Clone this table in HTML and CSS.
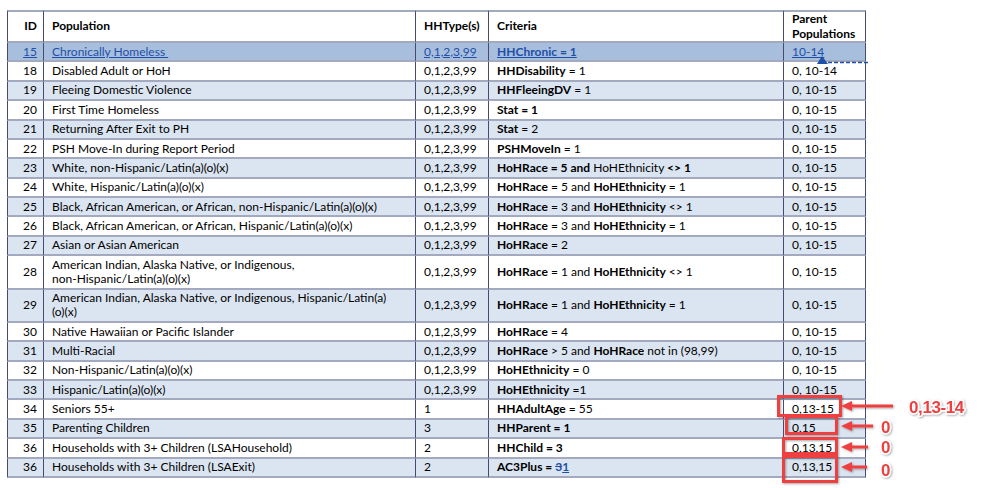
FILE: index.html
```html
<!DOCTYPE html>
<html>
<head>
<meta charset="utf-8">
<link rel="stylesheet" href="styles.css">
</head>
<body>
<div class="page">
<table class="pops">
<thead>
<tr><th class="id c-id">ID</th><th class="c-pop">Population</th><th class="c-hh">HHType(s)</th><th class="c-cr">Criteria</th><th class="c-par">Parent Populations</th></tr>
</thead>
<tbody>
<tr class="hl"><td class="id"><a>15</a></td><td><a>Chronically Homeless&nbsp;</a></td><td><a>0,1,2,3,99</a></td><td><a><b>HHChronic = 1</b></a></td><td><a>10-14</a></td></tr>
<tr><td class="id">18</td><td>Disabled Adult or HoH</td><td>0,1,2,3,99</td><td><b>HHDisability</b> = 1</td><td>0, 10-14</td></tr>
<tr class="alt"><td class="id">19</td><td>Fleeing Domestic Violence</td><td>0,1,2,3,99</td><td><b>HHFleeingDV</b> = 1</td><td>0, 10-15</td></tr>
<tr><td class="id">20</td><td>First Time Homeless</td><td>0,1,2,3,99</td><td><b>Stat = 1</b></td><td>0, 10-15</td></tr>
<tr class="alt"><td class="id">21</td><td>Returning After Exit to PH</td><td>0,1,2,3,99</td><td><b>Stat</b> = 2</td><td>0, 10-15</td></tr>
<tr><td class="id">22</td><td>PSH Move-In during Report Period</td><td>0,1,2,3,99</td><td><b>PSHMoveIn</b> = 1</td><td>0, 10-15</td></tr>
<tr class="alt"><td class="id">23</td><td>White, non-Hispanic/Latin(a)(o)(x)</td><td>0,1,2,3,99</td><td><b>HoHRace = 5 and</b> HoHEthnicity <b>&lt;&gt; 1</b></td><td>0, 10-15</td></tr>
<tr><td class="id">24</td><td>White, Hispanic/Latin(a)(o)(x)</td><td>0,1,2,3,99</td><td><b>HoHRace</b> = 5 and <b>HoHEthnicity</b> = 1</td><td>0, 10-15</td></tr>
<tr class="alt"><td class="id">25</td><td>Black, African American, or African, non-Hispanic/Latin(a)(o)(x)</td><td>0,1,2,3,99</td><td><b>HoHRace</b> = 3 and <b>HoHEthnicity</b> &lt;&gt; 1</td><td>0, 10-15</td></tr>
<tr><td class="id">26</td><td>Black, African American, or African, Hispanic/Latin(a)(o)(x)</td><td>0,1,2,3,99</td><td><b>HoHRace</b> = 3 and <b>HoHEthnicity</b> = 1</td><td>0, 10-15</td></tr>
<tr class="alt"><td class="id">27</td><td>Asian or Asian American</td><td>0,1,2,3,99</td><td><b>HoHRace</b> = 2</td><td>0, 10-15</td></tr>
<tr><td class="id">28</td><td>American Indian, Alaska Native, or Indigenous,<br>non-Hispanic/Latin(a)(o)(x)</td><td>0,1,2,3,99</td><td><b>HoHRace</b> = 1 and <b>HoHEthnicity</b> &lt;&gt; 1</td><td>0, 10-15</td></tr>
<tr class="alt"><td class="id">29</td><td>American Indian, Alaska Native, or Indigenous, Hispanic/Latin(a)<br>(o)(x)</td><td>0,1,2,3,99</td><td><b>HoHRace</b> = 1 and <b>HoHEthnicity</b> = 1</td><td>0, 10-15</td></tr>
<tr><td class="id">30</td><td>Native Hawaiian or Pacific Islander</td><td>0,1,2,3,99</td><td><b>HoHRace</b> = 4</td><td>0, 10-15</td></tr>
<tr class="alt"><td class="id">31</td><td>Multi-Racial</td><td>0,1,2,3,99</td><td><b>HoHRace</b> &gt; 5 and <b>HoHRace</b> not in (98,99)</td><td>0, 10-15</td></tr>
<tr><td class="id">32</td><td>Non-Hispanic/Latin(a)(o)(x)</td><td>0,1,2,3,99</td><td><b>HoHEthnicity</b> = 0</td><td>0, 10-15</td></tr>
<tr class="alt"><td class="id">33</td><td>Hispanic/Latin(a)(o)(x)</td><td>0,1,2,3,99</td><td><b>HoHEthnicity</b> =1</td><td>0, 10-15</td></tr>
<tr><td class="id">34</td><td>Seniors 55+</td><td>1</td><td><b>HHAdultAge</b> = 55</td><td>0,13-15</td></tr>
<tr class="alt"><td class="id">35</td><td>Parenting Children</td><td>3</td><td><b>HHParent = 1</b></td><td>0,15</td></tr>
<tr><td class="id">36</td><td>Households with 3+ Children (LSAHousehold)</td><td>2</td><td><b>HHChild = 3</b></td><td>0,13,15</td></tr>
<tr class="alt"><td class="id">36</td><td>Households with 3+ Children (LSAExit)</td><td>2</td><td><b>AC3Plus = <span class="del">3</span><span class="ins">1</span></b></td><td>0,13,15</td></tr>
</tbody>
</table>

<svg class="overlay" width="988" height="488" viewBox="0 0 988 488">
  <defs>
    <filter id="sh" x="-20%" y="-20%" width="140%" height="140%">
      <feDropShadow dx="1" dy="1" stdDeviation="1" flood-color="#000" flood-opacity="0.35"/>
    </filter>
  </defs>
  <g class="link-arrow">
    <polygon points="817,64 822,56 828,64" fill="#1f4fa8"/>
    <line x1="828" y1="62.5" x2="868" y2="62.5" stroke="#1f4fa8" stroke-width="1.5" stroke-dasharray="4 2"/>
  </g>
  <g fill="none" stroke="#ee4040" stroke-width="3" filter="url(#sh)">
    <rect x="778.5" y="396.5" width="62" height="19"/>
    <rect x="786.5" y="416.5" width="50" height="17"/>
    <rect x="783.5" y="438.5" width="53" height="15"/>
    <rect x="783.5" y="456.5" width="53" height="25"/>
  </g>
  <g stroke="#ee4040" stroke-width="3" fill="#ee4040" filter="url(#sh)">
    <line x1="850" y1="406" x2="893" y2="406"/>
    <polygon points="841,406 852,401 852,411" stroke="none"/>
    <line x1="850" y1="426" x2="873" y2="426"/>
    <polygon points="841,426 852,421 852,431" stroke="none"/>
    <line x1="850" y1="447" x2="868" y2="447"/>
    <polygon points="841,447 852,442 852,452" stroke="none"/>
    <line x1="850" y1="467" x2="867" y2="467"/>
    <polygon points="841,467 852,462 852,472" stroke="none"/>
  </g>
  <g class="notes" filter="url(#sh)">
    <text x="909" y="413">0,13-14</text>
    <text x="881" y="433">0</text>
    <text x="881" y="453">0</text>
    <text x="881" y="476">0</text>
  </g>
</svg>
</div>
</body>
</html>
```
FILE: styles.css
```css
body {
  margin: 0;
  background: #ffffff;
  color: #000000;
  font-family: Lato, "Liberation Sans", sans-serif;
  font-size: 12px;
}

.page {
  position: relative;
  width: 988px;
  height: 488px;
  box-sizing: border-box;
  padding: 10px 0 0 7px;
  overflow: hidden;
}

.pops {
  border-collapse: separate;
  border-spacing: 0;
  table-layout: fixed;
  width: 859px;
}

.pops th,
.pops td {
  box-sizing: border-box;
  border-left: 1px solid #454b6e;
  border-bottom: 2px solid #a3aabf;
  padding: 1.7px 8px;
  line-height: 14px;
  text-align: left;
  vertical-align: middle;
  white-space: nowrap;
}

.pops th {
  border-top: 2px solid #a3aabf;
  font-weight: bold;
  line-height: 14.5px;
  padding: 0 8px;
  white-space: normal;
}

.pops th:last-child,
.pops td:last-child {
  border-right: 1px solid #454b6e;
}

.pops .id {
  text-align: right;
  padding-right: 6px;
  padding-left: 2px;
}

.c-id { width: 36px; }
.c-pop { width: 372px; }
.c-hh { width: 73px; }
.c-cr { width: 295px; }
.c-par { width: 83px; }

.pops tr.alt td {
  background: #dbe5f1;
}

.pops tr.hl td {
  background: #a7bedd;
}

.pops a {
  color: #1f4fa8;
  text-decoration: underline;
}

.del {
  color: #1f4fa8;
  text-decoration: line-through;
}

.ins {
  color: #1f4fa8;
  text-decoration: underline;
}

.overlay {
  position: absolute;
  left: 0;
  top: 0;
  pointer-events: none;
}

.notes text {
  font-family: "Liberation Sans", Arial, sans-serif;
  font-weight: bold;
  font-size: 17px;
  letter-spacing: -0.4px;
  fill: #ee4040;
  stroke: #ffffff;
  stroke-width: 3px;
  paint-order: stroke;
  stroke-linejoin: round;
}
```
